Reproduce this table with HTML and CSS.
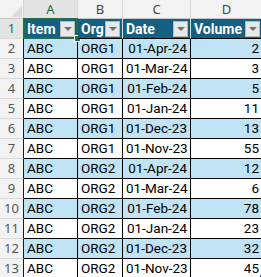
FILE: index.html
```html
<!DOCTYPE html>
<html>
<head>
<meta charset="utf-8">
<link rel="stylesheet" href="styles.css">
</head>
<body>
<div class="sheet">
  <div class="corner"><svg class="tri" width="24" height="19" viewBox="0 0 24 19"><polygon points="22,6 22,17 11,17" fill="#dcdcdc"/></svg></div>
  <div class="ch sel">A</div>
  <div class="ch">B</div>
  <div class="ch">C</div>
  <div class="ch">D</div>

  <div class="rh sel">1</div>
  <div class="th active"><span>Item</span><span class="btn"></span><span class="selbox"><span class="handle"></span></span></div>
  <div class="th"><span>Org</span><span class="btn"></span></div>
  <div class="th"><span>Date</span><span class="btn"></span></div>
  <div class="th"><span>Volume</span><span class="btn"></span></div>

  <div class="rh">2</div><div class="td band">ABC</div><div class="td band">ORG1</div><div class="td band num">01-Apr-24</div><div class="td band num">2</div>
  <div class="rh">3</div><div class="td">ABC</div><div class="td">ORG1</div><div class="td num">01-Mar-24</div><div class="td num">3</div>
  <div class="rh">4</div><div class="td band">ABC</div><div class="td band">ORG1</div><div class="td band num">01-Feb-24</div><div class="td band num">5</div>
  <div class="rh">5</div><div class="td">ABC</div><div class="td">ORG1</div><div class="td num">01-Jan-24</div><div class="td num">11</div>
  <div class="rh">6</div><div class="td band">ABC</div><div class="td band">ORG1</div><div class="td band num">01-Dec-23</div><div class="td band num">13</div>
  <div class="rh">7</div><div class="td">ABC</div><div class="td">ORG1</div><div class="td num">01-Nov-23</div><div class="td num">55</div>
  <div class="rh">8</div><div class="td band">ABC</div><div class="td band">ORG2</div><div class="td band num">01-Apr-24</div><div class="td band num">12</div>
  <div class="rh">9</div><div class="td">ABC</div><div class="td">ORG2</div><div class="td num">01-Mar-24</div><div class="td num">6</div>
  <div class="rh">10</div><div class="td band">ABC</div><div class="td band">ORG2</div><div class="td band num">01-Feb-24</div><div class="td band num">78</div>
  <div class="rh">11</div><div class="td">ABC</div><div class="td">ORG2</div><div class="td num">01-Jan-24</div><div class="td num">23</div>
  <div class="rh">12</div><div class="td band">ABC</div><div class="td band">ORG2</div><div class="td band num">01-Dec-23</div><div class="td band num">32</div>
  <div class="rh">13</div><div class="td">ABC</div><div class="td">ORG2</div><div class="td num">01-Nov-23</div><div class="td num last">45<span class="resize"></span></div>
</div>
</body>
</html>
```
FILE: styles.css
```css
html, body {
  margin: 0;
  padding: 0;
  background: #ffffff;
  overflow: hidden;
}
.sheet {
  display: grid;
  grid-template-columns: 24px 54px 45px 68px 72px;
  grid-template-rows: 19px repeat(13, 20px);
  width: 263px;
}
.sheet > div {
  box-sizing: border-box;
  border-right: 1px solid #000;
  border-bottom: 1px solid #000;
  overflow: visible;
}
.corner {
  background: #f3f3f3;
  position: relative;
}
.sheet > .corner {
  border-right: 1px solid #d4d4d4;
  border-bottom: 1px solid #c6c6c6;
}
.tri {
  position: absolute;
  left: 0;
  top: 0;
}
.ch {
  background: #f3f3f3;
  font-family: "Noto Sans", "DejaVu Sans", sans-serif;
  font-size: 13px;
  line-height: 18px;
  color: #444;
  text-align: center;
}
.sheet > .ch {
  border-right: 1px solid #dadada;
  border-bottom: 1px solid #c6c6c6;
}
.sheet > .ch.sel {
  background: #e4e4e4;
  color: #1e7145;
}
.rh {
  background: #f3f3f3;
  font-family: "Noto Sans", "DejaVu Sans", sans-serif;
  font-size: 13px;
  line-height: 19px;
  color: #555;
  text-align: center;
}
.sheet > .rh {
  border-bottom: 1px solid #dadada;
  border-right: 1px solid #1a1a1a;
}
.sheet > .rh.sel {
  background: #e4e4e4;
  color: #1e7145;
}
.th {
  background: #156082;
  color: #ffffff;
  font-family: Roboto, "Liberation Sans", sans-serif;
  font-weight: 700;
  font-size: 14px;
  display: flex;
  align-items: center;
  justify-content: space-between;
  padding: 0 2px 0 3px;
  position: relative;
}
.sheet > .th {
  border-right: 1px solid #d9d9d9;
  border-bottom: 1px solid #000;
}
.btn {
  width: 15px;
  height: 16px;
  box-sizing: border-box;
  background: #e9e9e9;
  border: 1px solid #b8b8b8;
  display: flex;
  align-items: center;
  justify-content: center;
  flex: none;
}
.btn::after {
  content: "";
  width: 0;
  height: 0;
  border-left: 4px solid transparent;
  border-right: 4px solid transparent;
  border-top: 4px solid #707070;
}
.selbox {
  position: absolute;
  left: -1px;
  top: -1px;
  right: -1px;
  bottom: -1px;
  border: 2px solid #1e7145;
  pointer-events: none;
}
.handle {
  position: absolute;
  right: -5px;
  bottom: -5px;
  width: 5px;
  height: 5px;
  background: #1e7145;
  border: 1px solid #ffffff;
}
.td {
  font-family: Roboto, "Liberation Sans", sans-serif;
  font-size: 13.5px;
  line-height: 19px;
  color: #000;
  padding: 0 3px;
  white-space: nowrap;
  overflow: hidden;
}
.band {
  background: #c0e4f5;
}
.num {
  text-align: right;
}
.last {
  position: relative;
}
.resize {
  position: absolute;
  right: 0;
  bottom: -2px;
  width: 3px;
  height: 5px;
  border-right: 2px solid #4a5bb5;
  border-bottom: 2px solid #4a5bb5;
  box-sizing: border-box;
}
```
